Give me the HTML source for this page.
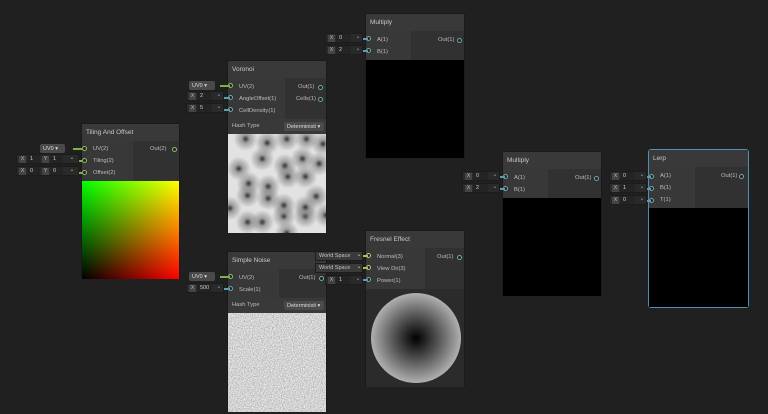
<!DOCTYPE html><html><head><style>
*{margin:0;padding:0;box-sizing:border-box}
body{width:768px;height:414px;background:#202020;position:relative;overflow:hidden;font-family:"Liberation Sans",sans-serif;font-size:6px;color:#c4c4c4}
.n{position:absolute;background:#2b2b2b;border:1px solid #1a1a1a}
.h{position:absolute;left:0;right:0;top:0;height:17px;background:#393939;padding:5px 0 0 4px;font-size:6.5px;color:#c8c8c8}
.in{position:absolute;left:0;background:#383838}
.out{position:absolute;right:0;background:#313131}
.p{position:absolute;font-size:5.8px;color:#bdbdbd;white-space:nowrap}
.d{position:absolute;width:5px;height:5px;border-radius:50%;border:1px solid #6fa8b0;background:#1e1e1e}
.dg{border-color:#8fc060}.dy{border-color:#c8c870}
.w{position:absolute;height:2px;background:#5fa0a8}
.wg{background:#7ab050}.wy{background:#b8b860}
.f{position:absolute;height:10px;background:#2a2a2a;border:1px solid #1c1c1c}
.f span{position:absolute;top:1px;font-size:5.5px;color:#c0c0c0}
.fx{position:absolute;top:1px;left:2px;width:7px;height:7px;background:#444;font-size:5px;text-align:center;line-height:7px;color:#bbb}
.fv{position:absolute;top:0;height:8px;background:#242424;font-size:5.5px;padding:1px 3px;color:#ccc}
.dd{position:absolute;height:9px;background:#4a4a4a;border-radius:2px;font-size:5.5px;color:#ddd;padding:1.5px 3px}
.ht{position:absolute;left:0;right:0;height:15px;background:#393939}
.pv{position:absolute;left:0;right:0}
</style></head><body>

<!-- Tiling and Offset -->
<div class="n" style="left:81px;top:123px;width:99px;height:156px">
<div class="h">Tiling And Offset</div>
<div class="in" style="top:17px;width:53px;height:40px"></div>
<div class="out" style="top:17px;width:46px;height:40px"></div>
<div class="p" style="left:11px;top:22px">UV(2)</div>
<div class="p" style="left:11px;top:34px">Tiling(2)</div>
<div class="p" style="left:11px;top:46px">Offset(2)</div>
<div class="p" style="left:68px;top:22px">Out(2)</div>
<div class="d" style="left:90px;top:23px;border-color:#8fc060"></div>
<div class="pv" style="top:57px;height:98px;background:linear-gradient(to top,#000,#00ff00),linear-gradient(to right,#000,#ff0000);background-blend-mode:screen"></div>
</div>
<div class="d dg" style="left:82px;top:146px"></div><div class="d dg" style="left:82px;top:158px"></div><div class="d dg" style="left:82px;top:170px"></div>
<div class="w wg" style="left:73px;top:148px;width:10px"></div><div class="w wg" style="left:73px;top:160px;width:10px"></div><div class="w wg" style="left:73px;top:172px;width:10px"></div>
<div class="dd" style="left:40px;top:144px;width:25px">UV0 ▾</div>
<div class="f" style="left:16px;top:154px;width:63px"><div class="fx">X</div><div class="fv" style="left:10px;width:13px">1</div><div class="fx" style="left:25px">Y</div><div class="fv" style="left:33px;width:13px">1</div><span style="left:54px;color:#8fc060">•</span></div>
<div class="f" style="left:16px;top:166px;width:63px"><div class="fx">X</div><div class="fv" style="left:10px;width:13px">0</div><div class="fx" style="left:25px">Y</div><div class="fv" style="left:33px;width:13px">0</div><span style="left:54px;color:#8fc060">•</span></div>

<!-- Voronoi -->
<div class="n" style="left:227px;top:60px;width:100px;height:173px">
<div class="h">Voronoi</div>
<div class="in" style="top:17px;width:58px;height:41px"></div>
<div class="out" style="top:17px;width:41px;height:41px"></div>
<div class="p" style="left:11px;top:23px">UV(2)</div>
<div class="p" style="left:11px;top:35px">AngleOffset(1)</div>
<div class="p" style="left:11px;top:47px">CellDensity(1)</div>
<div class="p" style="left:70px;top:23px">Out(1)</div>
<div class="p" style="left:68px;top:35px">Cells(1)</div>
<div class="d" style="left:90px;top:24px"></div><div class="d" style="left:90px;top:36px"></div>
<div class="ht" style="top:58px"><div class="p" style="left:4px;top:4px">Hash Type</div><div class="dd" style="left:56px;top:3px;width:40px">Deterministi ▾</div></div>
<div class="pv" style="top:73px;height:99px;background:
radial-gradient(circle at 18% 5%,#333 0,rgba(130,130,130,.7) 4px,transparent 12px),radial-gradient(circle at 40% 9%,#333 0,rgba(130,130,130,.7) 4px,transparent 12px),radial-gradient(circle at 60% 5%,#333 0,rgba(130,130,130,.7) 4px,transparent 12px),radial-gradient(circle at 80% 5%,#333 0,rgba(130,130,130,.7) 4px,transparent 12px),radial-gradient(circle at 97% 10%,#333 0,rgba(130,130,130,.7) 4px,transparent 12px),radial-gradient(circle at 11% 35%,#333 0,rgba(130,130,130,.7) 4px,transparent 12px),radial-gradient(circle at 35% 25%,#333 0,rgba(130,130,130,.7) 4px,transparent 12px),radial-gradient(circle at 58% 32%,#333 0,rgba(130,130,130,.7) 4px,transparent 12px),radial-gradient(circle at 76% 25%,#333 0,rgba(130,130,130,.7) 4px,transparent 12px),radial-gradient(circle at 93% 30%,#333 0,rgba(130,130,130,.7) 4px,transparent 12px),radial-gradient(circle at 21% 50%,#333 0,rgba(130,130,130,.7) 4px,transparent 12px),radial-gradient(circle at 41% 53%,#333 0,rgba(130,130,130,.7) 4px,transparent 12px),radial-gradient(circle at 61% 43%,#333 0,rgba(130,130,130,.7) 4px,transparent 12px),radial-gradient(circle at 79% 43%,#333 0,rgba(130,130,130,.7) 4px,transparent 12px),radial-gradient(circle at 20% 62%,#333 0,rgba(130,130,130,.7) 4px,transparent 12px),radial-gradient(circle at 41% 65%,#333 0,rgba(130,130,130,.7) 4px,transparent 12px),radial-gradient(circle at 90% 63%,#333 0,rgba(130,130,130,.7) 4px,transparent 12px),radial-gradient(circle at 57% 72%,#333 0,rgba(130,130,130,.7) 4px,transparent 12px),radial-gradient(circle at 79% 74%,#333 0,rgba(130,130,130,.7) 4px,transparent 12px),radial-gradient(circle at 57% 83%,#333 0,rgba(130,130,130,.7) 4px,transparent 12px),radial-gradient(circle at 79% 83%,#333 0,rgba(130,130,130,.7) 4px,transparent 12px),radial-gradient(circle at 100% 82%,#333 0,rgba(130,130,130,.7) 4px,transparent 12px),radial-gradient(circle at 20% 89%,#333 0,rgba(130,130,130,.7) 4px,transparent 12px),radial-gradient(circle at 35% 89%,#333 0,rgba(130,130,130,.7) 4px,transparent 12px),radial-gradient(circle at 60% 100%,#333 0,rgba(130,130,130,.7) 4px,transparent 12px),radial-gradient(circle at 2% 75%,#333 0,rgba(130,130,130,.7) 4px,transparent 12px),#e2e2e2"></div>
</div>
<div class="d dg" style="left:228px;top:83px"></div><div class="d" style="left:228px;top:95px"></div><div class="d" style="left:228px;top:107px"></div>
<div class="w wg" style="left:220px;top:85px;width:10px"></div><div class="w" style="left:220px;top:97px;width:10px"></div><div class="w" style="left:220px;top:109px;width:10px"></div>
<div class="dd" style="left:189px;top:81px;width:26px">UV0 ▾</div>
<div class="f" style="left:186px;top:91px;width:38px"><div class="fx">X</div><div class="fv" style="left:10px;width:15px">2</div><span style="left:31px;color:#6fa8b0">•</span></div>
<div class="f" style="left:186px;top:103px;width:38px"><div class="fx">X</div><div class="fv" style="left:10px;width:15px">5</div><span style="left:31px;color:#6fa8b0">•</span></div>

<!-- Multiply top -->
<div class="n" style="left:365px;top:13px;width:100px;height:145px">
<div class="h">Multiply</div>
<div class="in" style="top:17px;width:46px;height:29px"></div>
<div class="out" style="top:17px;width:53px;height:29px"></div>
<div class="p" style="left:11px;top:23px">A(1)</div>
<div class="p" style="left:11px;top:35px">B(1)</div>
<div class="p" style="left:72px;top:23px">Out(1)</div>
<div class="d" style="left:91px;top:24px"></div>
<div class="pv" style="top:46px;height:98px;background:#000"></div>
</div>
<div class="d" style="left:366px;top:36px"></div><div class="d" style="left:366px;top:48px"></div>
<div class="w" style="left:358px;top:38px;width:10px"></div><div class="w" style="left:358px;top:50px;width:10px"></div>
<div class="f" style="left:325px;top:33px;width:38px"><div class="fx">X</div><div class="fv" style="left:10px;width:15px">0</div><span style="left:31px;color:#6fa8b0">•</span></div>
<div class="f" style="left:325px;top:45px;width:38px"><div class="fx">X</div><div class="fv" style="left:10px;width:15px">2</div><span style="left:31px;color:#6fa8b0">•</span></div>

<!-- Simple Noise -->
<div class="n" style="left:227px;top:251px;width:100px;height:161px">
<div class="h">Simple Noise</div>
<div class="in" style="top:17px;width:52px;height:29px"></div>
<div class="out" style="top:17px;width:47px;height:29px"></div>
<div class="p" style="left:11px;top:23px">UV(2)</div>
<div class="p" style="left:11px;top:35px">Scale(1)</div>
<div class="p" style="left:71px;top:23px">Out(1)</div>
<div class="d" style="left:91px;top:24px"></div>
<div class="ht" style="top:46px"><div class="p" style="left:4px;top:4px">Hash Type</div><div class="dd" style="left:56px;top:3px;width:40px">Deterministi ▾</div></div>
<svg class="pv" style="top:61px" width="98" height="99"><filter id="t"><feTurbulence type="fractalNoise" baseFrequency="0.9" numOctaves="2" seed="3"/><feColorMatrix type="matrix" values="0.9 0 0 0 0.2 0.9 0 0 0 0.2 0.9 0 0 0 0.2 0 0 0 0 1"/></filter><rect width="98" height="99" filter="url(#t)"/></svg>
</div>
<div class="d dg" style="left:228px;top:274px"></div><div class="d" style="left:228px;top:286px"></div>
<div class="w wg" style="left:220px;top:276px;width:10px"></div><div class="w" style="left:220px;top:288px;width:10px"></div>
<div class="dd" style="left:189px;top:272px;width:26px">UV0 ▾</div>
<div class="f" style="left:186px;top:283px;width:38px"><div class="fx">X</div><div class="fv" style="left:10px;width:15px">500</div><span style="left:31px;color:#6fa8b0">•</span></div>

<!-- Fresnel -->
<div class="n" style="left:365px;top:230px;width:100px;height:157px">
<div class="h">Fresnel Effect</div>
<div class="in" style="top:17px;width:60px;height:41px"></div>
<div class="out" style="top:17px;width:39px;height:41px"></div>
<div class="p" style="left:11px;top:23px">Normal(3)</div>
<div class="p" style="left:11px;top:35px">View Dir(3)</div>
<div class="p" style="left:11px;top:47px">Power(1)</div>
<div class="p" style="left:71px;top:23px">Out(1)</div>
<div class="d" style="left:91px;top:24px"></div>
<div class="pv" style="top:58px;height:98px;background:#2b2b2b"><div style="position:absolute;left:5px;top:4px;width:90px;height:90px;border-radius:50%;background:radial-gradient(circle,#000 0,#555 35%,#bbb 75%,#f4f4f4 100%)"></div></div>
</div>
<div class="d dy" style="left:366px;top:253px"></div><div class="d dy" style="left:366px;top:265px"></div><div class="d" style="left:366px;top:277px"></div>
<div class="w wy" style="left:358px;top:255px;width:10px"></div><div class="w wy" style="left:358px;top:267px;width:10px"></div><div class="w" style="left:358px;top:279px;width:10px"></div>
<div class="f" style="left:315px;top:251px;width:48px;background:#3a3a3a"><span style="left:3px">World Space</span><span style="left:42px;color:#c8c870">•</span></div>
<div class="f" style="left:315px;top:263px;width:48px;background:#3a3a3a"><span style="left:3px">World Space</span><span style="left:42px;color:#c8c870">•</span></div>
<div class="f" style="left:325px;top:275px;width:38px"><div class="fx">X</div><div class="fv" style="left:10px;width:15px">1</div><span style="left:31px;color:#6fa8b0">•</span></div>

<!-- Multiply middle -->
<div class="n" style="left:502px;top:151px;width:100px;height:145px">
<div class="h">Multiply</div>
<div class="in" style="top:17px;width:46px;height:29px"></div>
<div class="out" style="top:17px;width:53px;height:29px"></div>
<div class="p" style="left:11px;top:23px">A(1)</div>
<div class="p" style="left:11px;top:35px">B(1)</div>
<div class="p" style="left:72px;top:23px">Out(1)</div>
<div class="d" style="left:91px;top:24px"></div>
<div class="pv" style="top:46px;height:98px;background:#000"></div>
</div>
<div class="d" style="left:503px;top:174px"></div><div class="d" style="left:503px;top:186px"></div>
<div class="w" style="left:495px;top:176px;width:10px"></div><div class="w" style="left:495px;top:188px;width:10px"></div>
<div class="f" style="left:462px;top:171px;width:38px"><div class="fx">X</div><div class="fv" style="left:10px;width:15px">0</div><span style="left:31px;color:#6fa8b0">•</span></div>
<div class="f" style="left:462px;top:183px;width:38px"><div class="fx">X</div><div class="fv" style="left:10px;width:15px">2</div><span style="left:31px;color:#6fa8b0">•</span></div>

<!-- Lerp -->
<div class="n" style="left:648px;top:149px;width:101px;height:159px;border:1px solid #4f8fb5;border-radius:3px">
<div class="h">Lerp</div>
<div class="in" style="top:17px;width:46px;height:41px"></div>
<div class="out" style="top:17px;width:53px;height:41px"></div>
<div class="p" style="left:11px;top:23px">A(1)</div>
<div class="p" style="left:11px;top:35px">B(1)</div>
<div class="p" style="left:11px;top:47px">T(1)</div>
<div class="p" style="left:72px;top:23px">Out(1)</div>
<div class="d" style="left:90px;top:24px"></div>
<div class="pv" style="top:58px;height:99px;background:#000"></div>
</div>
<div class="d" style="left:649px;top:174px"></div><div class="d" style="left:649px;top:186px"></div><div class="d" style="left:649px;top:198px"></div>
<div class="w" style="left:641px;top:176px;width:10px"></div><div class="w" style="left:641px;top:188px;width:10px"></div><div class="w" style="left:641px;top:200px;width:10px"></div>
<div class="f" style="left:609px;top:171px;width:38px"><div class="fx">X</div><div class="fv" style="left:10px;width:15px">0</div><span style="left:31px;color:#6fa8b0">•</span></div>
<div class="f" style="left:609px;top:183px;width:38px"><div class="fx">X</div><div class="fv" style="left:10px;width:15px">1</div><span style="left:31px;color:#6fa8b0">•</span></div>
<div class="f" style="left:609px;top:195px;width:38px"><div class="fx">X</div><div class="fv" style="left:10px;width:15px">0</div><span style="left:31px;color:#6fa8b0">•</span></div>
</body></html>
